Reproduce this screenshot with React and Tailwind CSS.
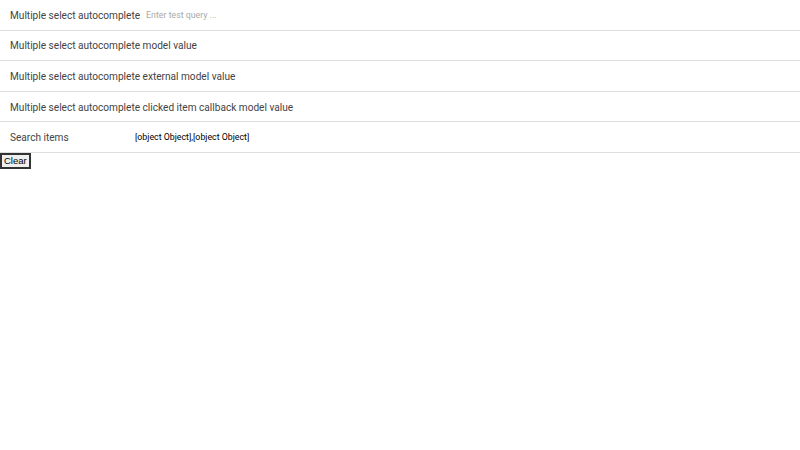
import React from 'react';

const Row = ({ children }) => (
    <div className="flex items-center h-[30.6px] pl-[10px] pt-[1px] border-b border-[#dedede] text-[#444]">
        {children}
    </div>
);

const App = () => {
    return (
        <div className="w-full bg-white font-['Roboto',sans-serif]">
            <Row>
                <span className="text-[10.1px]">Multiple select autocomplete</span>
                <span className="ml-[6px] text-[8.8px] text-[#aaa]">Enter test query ...</span>
            </Row>
            <Row>
                <span className="text-[10.1px]">Multiple select autocomplete model value</span>
            </Row>
            <Row>
                <span className="text-[10.1px]">Multiple select autocomplete external model value</span>
            </Row>
            <Row>
                <span className="text-[10.1px]">Multiple select autocomplete clicked item callback model value</span>
            </Row>
            <Row>
                <span className="text-[10.1px] w-[125px] shrink-0">Search items</span>
                <span className="text-[8.8px] text-black">[object Object],[object Object]</span>
            </Row>
            <button className="block font-['Liberation_Sans',sans-serif] font-normal text-[9.5px] text-black leading-[12px] px-[2px] py-0 bg-[#efefef] border-2 border-[#333] border-outset">
                Clear
            </button>
        </div>
    );
};

export default App;
